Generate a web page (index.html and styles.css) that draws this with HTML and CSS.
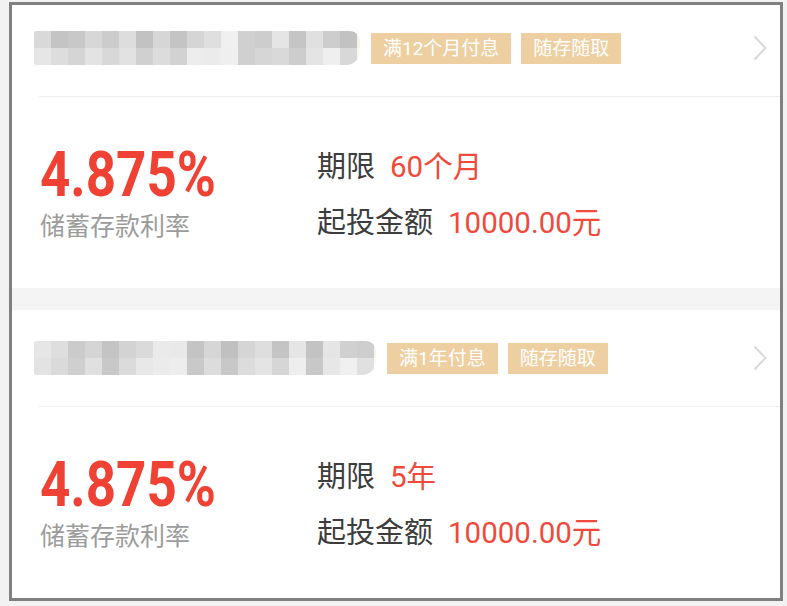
FILE: index.html
```html
<!DOCTYPE html>
<html lang="zh-CN">
<head>
  <meta charset="UTF-8" />
  <title>储蓄产品</title>
  <link rel="stylesheet" href="styles.css">
</head>
<body>
  <div class="frame">

    <div class="card">
      <div class="card-head">
        <div class="mosaic mosaic-one">
          <div class="mosaic-row"></div>
          <div class="mosaic-row"></div>
        </div>
        <span class="tag tag-first">满12个月付息</span>
        <span class="tag">随存随取</span>
        <svg class="chevron" width="14" height="26" viewBox="0 0 14 26">
          <polyline points="1.5,1.5 12.5,13 1.5,24.5" fill="none" stroke="#d9d9d9" stroke-width="2" />
        </svg>
      </div>
      <div class="card-body">
        <div class="rate">
          <div class="rate-value">4.875%</div>
          <div class="rate-label">储蓄存款利率</div>
        </div>
        <div class="info">
          <div class="info-row"><span class="info-key">期限</span><span class="info-val">60个月</span></div>
          <div class="info-row"><span class="info-key">起投金额</span><span class="info-val">10000.00元</span></div>
        </div>
      </div>
    </div>

    <div class="gap"></div>

    <div class="card">
      <div class="card-head">
        <div class="mosaic mosaic-two">
          <div class="mosaic-row"></div>
          <div class="mosaic-row"></div>
        </div>
        <span class="tag tag-first">满1年付息</span>
        <span class="tag">随存随取</span>
        <svg class="chevron" width="14" height="26" viewBox="0 0 14 26">
          <polyline points="1.5,1.5 12.5,13 1.5,24.5" fill="none" stroke="#d9d9d9" stroke-width="2" />
        </svg>
      </div>
      <div class="card-body">
        <div class="rate">
          <div class="rate-value">4.875%</div>
          <div class="rate-label">储蓄存款利率</div>
        </div>
        <div class="info">
          <div class="info-row"><span class="info-key">期限</span><span class="info-val">5年</span></div>
          <div class="info-row"><span class="info-key">起投金额</span><span class="info-val">10000.00元</span></div>
        </div>
      </div>
    </div>

  </div>
</body>
</html>
```

FILE: styles.css
```css
html {
  background: #f2f2f2;
}

body {
  margin: 2px 4px 5px 9px;
  font-family: Roboto, "Noto Sans CJK SC", sans-serif;
}

.frame {
  height: 593px;
  border: 3px solid #808080;
  background: #fff;
  overflow: hidden;
}

.card {
  height: 288px;
  background: #fff;
}

.card:first-child {
  margin-top: -5px;
}

.gap {
  height: 22px;
  background: #f4f4f4;
}

/* header: blurred title, tags, arrow */
.card-head {
  height: 96px;
  display: flex;
  align-items: center;
  padding: 0 13px 0 22px;
}

.mosaic {
  flex: none;
  overflow: hidden;
  border-radius: 2px 10px 14px 2px;
}

.mosaic-row {
  height: 17px;
}

.mosaic-one {
  width: 326px;
}

.mosaic-one .mosaic-row:first-child {
  background: linear-gradient(to right,
    #d9d9d9 0 17px, #c4c4c4 17px 34px, #c8c8c8 34px 51px, #d7d7d7 51px 68px,
    #cccccc 68px 85px, #dddddd 85px 102px, #c2c2c2 102px 119px, #d6d6d6 119px 136px,
    #c4c4c4 136px 153px, #d5d5d5 153px 170px, #dfdfdf 170px 187px, #f0f0f0 187px 204px,
    #d0d0d0 204px 221px, #cdcdcd 221px 238px, #e5e5e5 238px 255px, #c5c5c5 255px 272px,
    #e0e0e0 272px 289px, #cdcdcd 289px 306px, #c2c2c2 306px 323px, #f8f3ea 323px);
}

.mosaic-one .mosaic-row:last-child {
  background: linear-gradient(to right,
    #e6e6e6 0 17px, #dddddd 17px 34px, #d5d5d5 34px 51px, #e3e3e3 51px 68px,
    #d8d8d8 68px 85px, #e2e2e2 85px 102px, #d0d0d0 102px 119px, #dcdcdc 119px 136px,
    #d2d2d2 136px 153px, #ededed 153px 170px, #ebebeb 170px 187px, #efefef 187px 204px,
    #d0d0d0 204px 221px, #d6d6d6 221px 238px, #d9d9d9 238px 255px, #cdcdcd 255px 272px,
    #e4e4e4 272px 289px, #efefef 289px 306px, #d8d8d8 306px 323px, #fbf8f2 323px);
}

.mosaic-two {
  width: 342px;
}

.mosaic-two .mosaic-row:first-child {
  background: linear-gradient(to right,
    #e6e6e6 0 17px, #dedede 17px 34px, #cbcbcb 34px 51px, #d5d5d5 51px 68px,
    #c4c4c4 68px 85px, #d3d3d3 85px 102px, #dadada 102px 119px, #eaeaea 119px 136px,
    #e9e9e9 136px 153px, #c4c4c4 153px 170px, #d6d6d6 170px 187px, #c0c0c0 187px 204px,
    #d5d5d5 204px 221px, #dedede 221px 238px, #c4c4c4 238px 255px, #e5e5e5 255px 272px,
    #c3c3c3 272px 289px, #e5e5e5 289px 306px, #d0d0d0 306px 323px, #cecece 323px 340px,
    #f8f3ea 340px);
}

.mosaic-two .mosaic-row:last-child {
  background: linear-gradient(to right,
    #e3e3e3 0 17px, #dadada 17px 34px, #cfcfcf 34px 51px, #e0e0e0 51px 68px,
    #c8c8c8 68px 85px, #dbdbdb 85px 102px, #e8e8e8 102px 119px, #ebebeb 119px 136px,
    #ededed 136px 153px, #c9c9c9 153px 170px, #dcdcdc 170px 187px, #c8c8c8 187px 204px,
    #dcdcdc 204px 221px, #e4e4e4 221px 238px, #d6d6d6 238px 255px, #eeeeee 255px 272px,
    #c8c8c8 272px 289px, #e7e7e7 289px 306px, #f0f0f0 306px 323px, #e0e0e0 323px 340px,
    #fbf8f2 340px);
}

.tag {
  flex: none;
  margin-right: 10px;
  padding: 0 12px;
  font-size: 19px;
  line-height: 31px;
  color: #fff;
  background: #eecfa1;
}

.tag-first {
  margin-left: 11px;
}

.chevron {
  margin-left: auto;
  flex: none;
}

/* body: rate on the left, terms on the right */
.card-body {
  box-sizing: border-box;
  height: 192px;
  margin-left: 27px;
  padding-left: 1px;
  border-top: 1px solid #eeeeee;
  display: flex;
  align-items: center;
}

.rate {
  width: 277px;
  flex: none;
}

.rate-value {
  font-size: 63px;
  font-weight: bold;
  line-height: 63px;
  color: #ef4234;
  transform: scaleX(0.84);
  transform-origin: left center;
}

.rate-label {
  margin-top: 6px;
  font-size: 25px;
  line-height: 30px;
  color: #9b9b9b;
}

.info {
  padding-top: 5px;
}

.info-row {
  font-size: 29px;
  line-height: 40px;
  white-space: nowrap;
}

.info-row + .info-row {
  margin-top: 16px;
}

.info-key {
  color: #3d3d3d;
}

.info-val {
  margin-left: 15px;
  font-size: 29.5px;
  color: #ef4a3b;
}
```
